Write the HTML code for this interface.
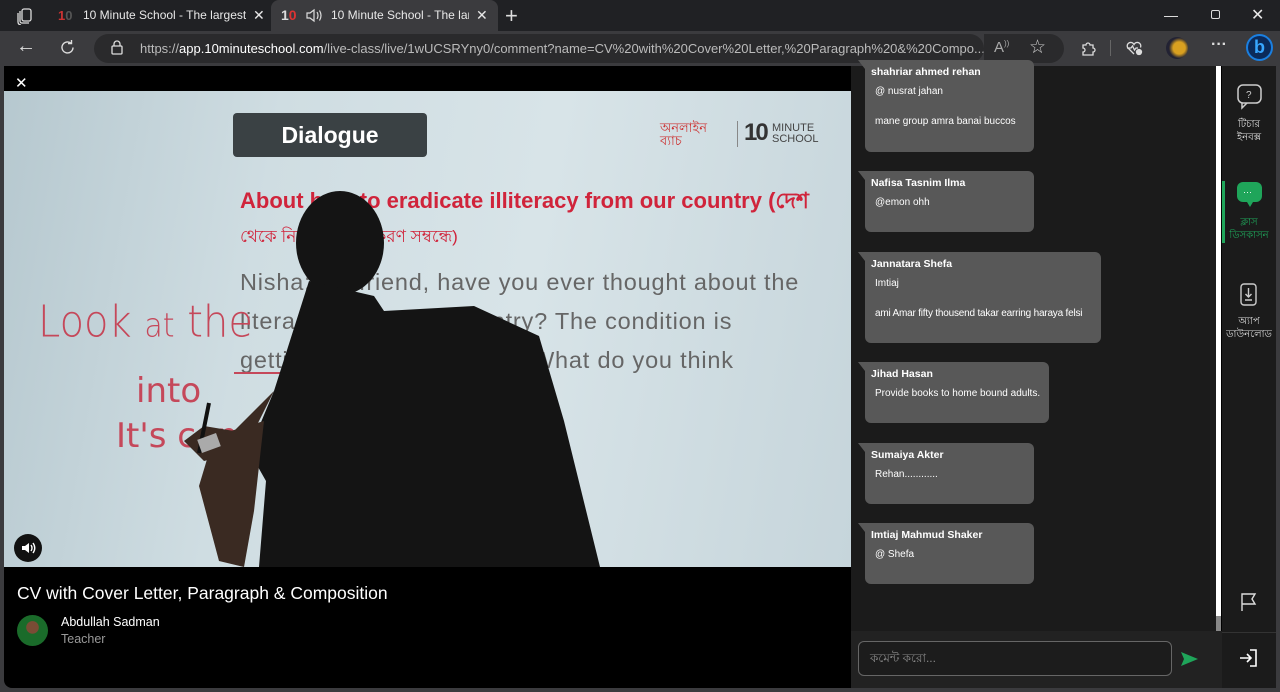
<!DOCTYPE html>
<html><head><meta charset="utf-8"><style>
*{margin:0;padding:0;box-sizing:border-box}
body{width:1280px;height:692px;overflow:hidden;background:#3b3b3e;font-family:"Liberation Sans",sans-serif;position:relative}
.abs{position:absolute}
.tabbar{left:0;top:0;width:1280px;height:31px;background:#202124}
.tab{top:0;height:31px;color:#e8e8e8;font-size:12px;line-height:31px;white-space:nowrap;overflow:hidden}
.addr{left:0;top:31px;width:1280px;height:35px;background:#3b3b3e}
.url{left:94px;top:34px;width:970px;height:29px;border-radius:15px;background:#2a2a2c;color:#bbb;font-size:13px;line-height:29px;padding-left:46px;white-space:nowrap;overflow:hidden}
.url b{color:#fff;font-weight:normal}
.page{left:4px;top:66px;width:1272px;height:622px;background:#000;border-radius:0 0 8px 8px;overflow:hidden}
.chat{left:851px;top:66px;width:366px;height:622px;background:#1b1b1b}
.side{left:1222px;top:66px;width:54px;height:622px;background:#1b1b1b}
.b{position:absolute;left:865px;background:#585858;border-radius:0 6px 6px 6px;color:#fff;font-size:10px;white-space:nowrap}
.b .n{position:absolute;left:6px;top:6px;font-weight:bold;font-size:10.5px}
.b .t{position:absolute;left:10px}
.b:before{content:"";position:absolute;left:-7px;top:0;border-top:9px solid #585858;border-left:7px solid transparent}
.sl{color:#ddd;font-size:10px;text-align:center;width:54px;position:absolute;left:1222px;line-height:13px;font-family:"Liberation Sans","Noto Sans CJK SC",sans-serif}
</style></head><body>
<div class="abs tabbar"></div>
<svg class="abs" style="left:16px;top:7px" width="18" height="18" viewBox="0 0 18 18" fill="none" stroke="#ddd" stroke-width="1.3"><rect x="6" y="2" width="9" height="12" rx="2"/><path d="M4 4v10a2 2 0 0 0 2 2h7"/><path d="M2 6v9a3 3 0 0 0 3 3"/></svg>
<div class="abs tab" style="left:58px;color:#c33;font-weight:bold;font-size:13px">1<span style="color:#555">0</span></div>
<div class="abs tab" style="left:83px;width:163px">10 Minute School - The largest o</div>
<div class="abs tab" style="left:253px;font-size:14px">✕</div>
<div class="abs" style="left:271px;top:0;width:227px;height:31px;background:#3b3b3e;border-radius:8px 8px 0 0"></div>
<div class="abs tab" style="left:281px;color:#ddd;font-weight:bold;font-size:14px">1<span style="color:#d33">0</span></div>
<svg class="abs" style="left:305px;top:8px" width="18" height="15" viewBox="0 0 18 15" fill="none" stroke="#ddd" stroke-width="1.2"><path d="M2 5h3l4-3v11l-4-3H2z"/><path d="M12 4q2 3.5 0 7M14.5 2.5q3 5 0 10"/></svg>
<div class="abs tab" style="left:331px;width:138px">10 Minute School - The larg</div>
<div class="abs tab" style="left:476px;font-size:14px">✕</div>
<div class="abs tab" style="left:505px;font-size:22px;font-weight:300;color:#ddd">+</div>
<div class="abs tab" style="left:1164px;font-size:14px">—</div>
<div class="abs" style="left:1211px;top:10px;width:9px;height:9px;border:1.3px solid #ddd;border-radius:2px"></div>
<div class="abs tab" style="left:1251px;font-size:16px">✕</div>
<div class="abs addr"></div>
<div class="abs" style="left:16px;top:35px;color:#ddd;font-size:20px">←</div>
<svg class="abs" style="left:59px;top:39px" width="17" height="17" viewBox="0 0 17 17" fill="none" stroke="#ddd" stroke-width="1.4"><path d="M14 8.5a5.5 5.5 0 1 1-2-4.3"/><path d="M12.5 1v3.5H9"/></svg>
<div class="abs url" style="width:890px">https://<b>app.10minuteschool.com</b>/live-class/live/1wUCSRYny0/comment?name=CV%20with%20Cover%20Letter,%20Paragraph%20&amp;%20Compo...</div>
<svg class="abs" style="left:110px;top:40px" width="14" height="16" viewBox="0 0 14 16" fill="none" stroke="#ddd" stroke-width="1.3"><rect x="2" y="6" width="10" height="8" rx="1"/><path d="M4 6V4a3 3 0 0 1 6 0v2"/></svg>
<div class="abs" style="left:984px;top:34px;width:80px;height:29px;border-radius:0 15px 15px 0;background:#2a2a2c"></div>
<div class="abs" style="left:994px;top:39px;color:#aaa;font-size:15px">A<sup style="font-size:8px">))</sup></div>
<div class="abs" style="left:1029px;top:36px;color:#ccc;font-size:19px">☆</div>
<svg class="abs" style="left:1080px;top:40px" width="16" height="16" viewBox="0 0 16 16" fill="none" stroke="#ddd" stroke-width="1.3"><path d="M3 5h3a2 2 0 1 1 4 0h3v3a2 2 0 1 1 0 4v3H3v-3a2 2 0 1 0 0-4z"/></svg>
<div class="abs" style="left:1110px;top:40px;width:1px;height:16px;background:#666"></div>
<svg class="abs" style="left:1125px;top:40px" width="18" height="16" viewBox="0 0 18 16" fill="none" stroke="#ddd" stroke-width="1.3"><path d="M9 14L2.5 7.5a3.5 3.5 0 0 1 6.5-3 3.5 3.5 0 0 1 6.5 3"/><path d="M2 8h4l1.5-2 2 4 1.5-2h2"/><circle cx="14" cy="12" r="2.5" fill="#ddd"/></svg>
<div class="abs" style="left:1166px;top:37px;width:22px;height:22px;border-radius:50%;background:radial-gradient(circle at 60% 50%,#d9a020 0 35%,#223 60%)"></div>
<div class="abs" style="left:1211px;top:36px;color:#ddd;font-size:16px;font-weight:bold">···</div>
<div class="abs" style="left:1246px;top:34px;width:27px;height:27px;border-radius:50%;background:#0b2a5a;border:2px solid #1a7fe0;color:#38a6ff;font-weight:bold;font-size:18px;text-align:center;line-height:23px">b</div>

<div class="abs page"></div>
<div class="abs" style="left:15px;top:74px;color:#fff;font-size:15px">✕</div>
<!-- video -->
<div class="abs" style="left:4px;top:91px;width:847px;height:476px;background:linear-gradient(100deg,#b6c8cf 0%,#cfdde2 30%,#d8e4e8 60%,#c6d5db 100%);overflow:hidden">
 <div class="abs" style="left:229px;top:22px;width:194px;height:44px;background:#3a4144;border-radius:4px;color:#fff;font-weight:bold;font-size:23px;text-align:center;line-height:44px">Dialogue</div>
 <div class="abs" style="left:656px;top:30px;color:#c33;font-size:13px;line-height:13px;font-family:'Liberation Sans','Noto Sans CJK SC',sans-serif">অনলাইন<br>ব্যাচ</div>
 <div class="abs" style="left:733px;top:30px;width:1px;height:26px;background:#888"></div>
 <div class="abs" style="left:740px;top:28px;color:#333;font-size:24px;font-weight:bold;letter-spacing:-2px">10</div>
 <div class="abs" style="left:768px;top:32px;color:#444;font-size:11px;line-height:11px">MINUTE<br>SCHOOL</div>
 <div class="abs" style="left:236px;top:93px;color:#d0243b;font-size:22px;font-weight:bold;white-space:nowrap;font-family:'Liberation Sans','Noto Sans CJK SC',sans-serif">About how to eradicate illiteracy from our country (দেশ</div>
 <div class="abs" style="left:236px;top:133px;color:#d0243b;font-size:17px;white-space:nowrap;font-family:'Liberation Sans','Noto Sans CJK SC',sans-serif">থেকে নিরক্ষরতা দূরীকরণ সম্বন্ধে)</div>
 <div class="abs" style="left:236px;top:172px;color:#666;font-size:23.5px;letter-spacing:0.8px;white-space:nowrap;line-height:39px">Nisha: My friend, have you ever thought about the<br>literacy rate of our country? The condition is<br>getting worse day by day. What do you think</div>
 <div class="abs" style="left:34px;top:208px;color:#c5485a;font-size:40px;font-family:'DejaVu Sans',sans-serif;font-weight:100;transform:scaleY(1.1)">Look <span style="font-size:30px">at</span> the</div>
 <div class="abs" style="left:132px;top:280px;color:#c5485a;font-size:34px;font-family:'DejaVu Sans',sans-serif">into</div>
 <div class="abs" style="left:112px;top:325px;color:#c5485a;font-size:34px;font-family:'DejaVu Sans',sans-serif">It's com</div>
 <div class="abs" style="left:230px;top:281px;width:90px;height:2px;background:#c5485a"></div>
 <svg class="abs" style="left:0;top:0" width="847" height="476"><g fill="#141414">
  <ellipse cx="336" cy="152" rx="44" ry="52"/>
  <path d="M305 190 L370 205 L380 220 L470 215 L535 245 L560 330 L596 476 L255 476 L262 390 L245 360 L270 300 Z"/>
  <path d="M270 300 L230 340 L200 335 L180 350 L200 370 L240 360 Z" fill="#3a2a22"/>
  <path d="M260 330 L210 345 L195 395 L215 470 L240 476 L250 420 Z" fill="#3a2a22"/>
 </g><path d="M195 362 l10 -50" stroke="#111" stroke-width="4"/><rect x="195" y="345" width="20" height="14" fill="#aaa" transform="rotate(-20 205 352)"/></svg>
 <div class="abs" style="left:10px;top:443px;width:28px;height:28px;border-radius:50%;background:#111"></div>
 <svg class="abs" style="left:16px;top:449px" width="16" height="16" viewBox="0 0 16 16"><path d="M2 6h3l4-3v10l-4-3H2z" fill="#fff"/><path d="M11 5q2 3 0 6M13 3q3.5 5 0 10" stroke="#fff" stroke-width="1.4" fill="none"/></svg>
</div>
<div class="abs" style="left:17px;top:583px;color:#fff;font-size:17.5px">CV with Cover Letter, Paragraph &amp; Composition</div>
<div class="abs" style="left:17px;top:615px;width:31px;height:31px;border-radius:50%;background:radial-gradient(circle at 50% 40%,#7a4c35 0 25%,#1a6b2a 27%)"></div>
<div class="abs" style="left:61px;top:615px;color:#fff;font-size:12.5px">Abdullah Sadman</div>
<div class="abs" style="left:61px;top:632px;color:#999;font-size:12.5px">Teacher</div>

<!-- chat -->
<div class="abs chat"></div>
<div class="b" style="top:60px;width:169px;height:92px"><div class="n">shahriar ahmed rehan</div><div class="t" style="top:26px">@ nusrat jahan</div><div class="t" style="top:56px">mane group amra banai buccos</div></div>
<div class="b" style="top:171px;width:169px;height:61px"><div class="n">Nafisa Tasnim Ilma</div><div class="t" style="top:26px">@emon ohh</div></div>
<div class="b" style="top:252px;width:236px;height:91px"><div class="n">Jannatara Shefa</div><div class="t" style="top:26px">Imtiaj</div><div class="t" style="top:56px;letter-spacing:-0.2px">ami Amar fifty thousend takar earring haraya felsi</div></div>
<div class="b" style="top:362px;width:184px;height:61px"><div class="n">Jihad Hasan</div><div class="t" style="top:26px">Provide books to home bound adults.</div></div>
<div class="b" style="top:443px;width:169px;height:61px"><div class="n">Sumaiya Akter</div><div class="t" style="top:26px">Rehan............</div></div>
<div class="b" style="top:523px;width:169px;height:61px"><div class="n">Imtiaj Mahmud Shaker</div><div class="t" style="top:26px">@ Shefa</div></div>
<div class="abs" style="left:1216px;top:66px;width:5px;height:565px;background:#fff"></div>
<div class="abs" style="left:1216px;top:616px;width:5px;height:15px;background:#888"></div>
<div class="abs" style="left:851px;top:631px;width:371px;height:57px;background:#222"></div>
<div class="abs" style="left:858px;top:641px;width:314px;height:35px;border:1px solid #666;border-radius:6px;background:#1c1c1c;color:#888;font-size:12px;line-height:33px;padding-left:11px;font-family:'Liberation Sans','Noto Sans CJK SC',sans-serif">কমেন্ট করো...</div>
<svg class="abs" style="left:1181px;top:652px" width="17" height="14" viewBox="0 0 17 14"><path d="M0 0L17 7L0 14L3 7Z" fill="#1fa55a"/></svg>
<!-- side -->
<div class="abs side"></div>
<svg class="abs" style="left:1237px;top:84px" width="25" height="26" viewBox="0 0 25 26" fill="none" stroke="#ccc" stroke-width="1.5"><rect x="1" y="1" width="23" height="18" rx="5"/><path d="M5 19v5l5-5"/><text x="9" y="14" fill="#ccc" stroke="none" font-size="10" font-family="Liberation Sans">?</text></svg>
<div class="sl" style="top:118px">টিচার<br>ইনবক্স</div>
<div class="abs" style="left:1222px;top:181px;width:3px;height:62px;background:#1fa55a"></div>
<svg class="abs" style="left:1237px;top:182px" width="25" height="26" viewBox="0 0 25 26"><rect x="0" y="0" width="25" height="20" rx="6" fill="#1fa55a"/><path d="M10 20l3 5 3-5z" fill="#1fa55a"/><text x="6" y="13" fill="#fff" font-size="9" font-family="Liberation Sans">···</text></svg>
<div class="sl" style="top:216px;color:#1fa55a">ক্লাস<br>ডিসকাসন</div>
<svg class="abs" style="left:1240px;top:283px" width="17" height="23" viewBox="0 0 17 23" fill="none" stroke="#ccc" stroke-width="1.4"><rect x="1" y="1" width="15" height="21" rx="3"/><path d="M8.5 5v9M5.5 11l3 3 3-3M5 17h7"/></svg>
<div class="sl" style="top:315px">অ্যাপ<br>ডাউনলোড</div>
<svg class="abs" style="left:1240px;top:592px" width="18" height="20" viewBox="0 0 18 20" fill="none" stroke="#ddd" stroke-width="1.4"><path d="M2 19V2h13l-3 5 3 5H2"/></svg>
<div class="abs" style="left:1222px;top:632px;width:54px;height:1px;background:#333"></div>
<svg class="abs" style="left:1239px;top:648px" width="20" height="20" viewBox="0 0 20 20" fill="none" stroke="#fff" stroke-width="1.6"><path d="M11 2h6v16h-6M1 10h11M8 6l4 4-4 4"/></svg>
</body></html>
